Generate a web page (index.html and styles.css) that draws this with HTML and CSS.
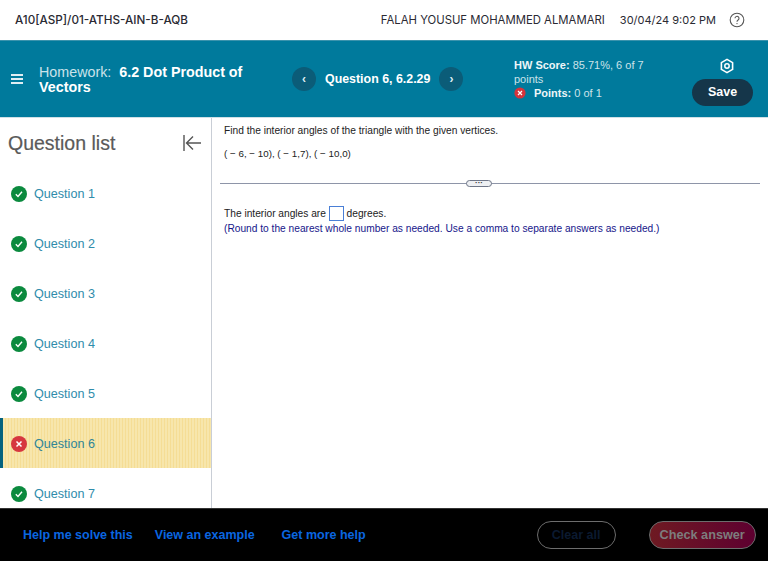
FILE: index.html
```html
<!DOCTYPE html>
<html lang="en">
<head>
<meta charset="utf-8">
<title>Homework</title>
<link rel="stylesheet" href="styles.css">
</head>
<body>
<div class="page">
  <div class="topbar">
    <div class="course">A10[ASP]/01-ATHS-AIN-B-AQB</div>
    <div class="top-right">
      <span class="student">FALAH YOUSUF MOHAMMED ALMAMARI</span>
      <span class="date">30/04/24 9:02 PM</span>
      <svg class="help" viewBox="0 0 16 16" width="16" height="16"><circle cx="8" cy="8" r="6.8" fill="none" stroke="#555" stroke-width="1.1"/><path d="M6 6.3a2 2 0 1 1 3.1 1.7c-.7.5-1.1.8-1.1 1.7" fill="none" stroke="#555" stroke-width="1.1"/><circle cx="8" cy="11.6" r=".7" fill="#555"/></svg>
    </div>
  </div>
  <header class="hw-header">
    <div class="menu"><span></span><span></span><span></span></div>
    <div class="hw-title"><span class="light">Homework:</span>&nbsp; <b>6.2 Dot Product of Vectors</b></div>
    <div class="q-nav">
      <span class="circle">‹</span>
      <b class="q-label">Question 6, 6.2.29</b>
      <span class="circle">›</span>
    </div>
    <div class="score">
      <div><b>HW Score:</b> <span class="light">85.71%, 6 of 7 points</span></div>
      <div class="points"><svg class="mini" viewBox="0 0 12 12" width="12" height="12"><circle cx="6" cy="6" r="5.6" fill="#d4343c"/><path d="M4 4l4 4M8 4l-4 4" stroke="#fff" stroke-width="1.2"/></svg><b>Points:</b> <span class="light">0 of 1</span></div>
    </div>
    <div class="actions">
      <svg class="gear" viewBox="0 0 16 16" width="16" height="16"><path d="M8 1.4l5.6 3.2v6.8L8 14.6l-5.6-3.2V4.6z" fill="none" stroke="#fff" stroke-width="1.6" stroke-linejoin="round"/><circle cx="8" cy="8" r="2.2" fill="none" stroke="#fff" stroke-width="1.5"/></svg>
      <button class="save">Save</button>
    </div>
  </header>
  <div class="main">
    <aside class="sidebar">
      <div class="side-head">
        <span class="side-title">Question list</span>
        <svg viewBox="0 0 20 18" width="20" height="18"><path d="M2 1v16M19 9H5M11 2.500L4.500 9l6.500 6.500" fill="none" stroke="#555" stroke-width="1.400"/></svg>
      </div>
      <ul class="qlist">
        <li class="q"><svg class="st" viewBox="0 0 16 16"><circle cx="8" cy="8" r="8" fill="#0b8a3e"/><path d="M4.800 8.300l2.200 2.200 4-4.700" fill="none" stroke="#fff" stroke-width="1.400"/></svg>Question 1</li>
        <li class="q"><svg class="st" viewBox="0 0 16 16"><circle cx="8" cy="8" r="8" fill="#0b8a3e"/><path d="M4.800 8.300l2.200 2.200 4-4.700" fill="none" stroke="#fff" stroke-width="1.400"/></svg>Question 2</li>
        <li class="q"><svg class="st" viewBox="0 0 16 16"><circle cx="8" cy="8" r="8" fill="#0b8a3e"/><path d="M4.800 8.300l2.200 2.200 4-4.700" fill="none" stroke="#fff" stroke-width="1.400"/></svg>Question 3</li>
        <li class="q"><svg class="st" viewBox="0 0 16 16"><circle cx="8" cy="8" r="8" fill="#0b8a3e"/><path d="M4.800 8.300l2.200 2.200 4-4.700" fill="none" stroke="#fff" stroke-width="1.400"/></svg>Question 4</li>
        <li class="q"><svg class="st" viewBox="0 0 16 16"><circle cx="8" cy="8" r="8" fill="#0b8a3e"/><path d="M4.800 8.300l2.200 2.200 4-4.700" fill="none" stroke="#fff" stroke-width="1.400"/></svg>Question 5</li>
        <li class="q current"><svg class="st" viewBox="0 0 16 16"><circle cx="8" cy="8" r="8" fill="#d6373f"/><path d="M5.500 5.500l5 5M10.500 5.500l-5 5" stroke="#fff" stroke-width="1.500"/></svg>Question 6</li>
        <li class="q"><svg class="st" viewBox="0 0 16 16"><circle cx="8" cy="8" r="8" fill="#0b8a3e"/><path d="M4.800 8.300l2.200 2.200 4-4.700" fill="none" stroke="#fff" stroke-width="1.400"/></svg>Question 7</li>
      </ul>
    </aside>
    <section class="content">
      <p class="prompt">Find the interior angles of the triangle with the given vertices.</p>
      <p class="verts">( − 6, − 10), ( − 1,7), ( − 10,0)</p>
      <div class="divider"><span class="handle">···</span></div>
      <p class="answer">The interior angles are <span class="box"></span> degrees.</p>
      <p class="hint">(Round to the nearest whole number as needed. Use a comma to separate answers as needed.)</p>
    </section>
  </div>
  <footer class="footer">
    <a class="flink">Help me solve this</a>
    <a class="flink l2">View an example</a>
    <a class="flink l3">Get more help</a>
    <button class="clear">Clear all</button>
    <button class="check">Check answer</button>
  </footer>
</div>
</body>
</html>
```
FILE: styles.css
```css
* { box-sizing: border-box; }
html, body { margin: 0; padding: 0; background: #fff; }
body { font-family: "Inter", "Liberation Sans", sans-serif; }
.page { width: 768px; height: 566px; overflow: hidden; display: flex; flex-direction: column; }

.topbar { height: 40px; flex: none; display: flex; align-items: center; justify-content: space-between; padding: 0 23px 1px 15px; color: #2a2a33; }
.course { font-weight: 500; font-size: 11.700px; }
.top-right { display: flex; align-items: center; }
.student { margin-right: 15px; font-size: 11.350px; }
.date { margin-right: 13px; font-size: 11px; }

.hw-header { height: 78px; flex: none; background: #007a9c; color: #fff; display: flex; align-items: center; position: relative; font-family: "Liberation Sans", sans-serif; border-bottom: 1px solid #cfe0e6; border-top: 1px solid #3b93ad; }
.menu { width: 12px; margin-left: 11px; display: flex; flex-direction: column; gap: 2.500px; }
.menu span { display: block; height: 1.500px; background: #dfeef3; }
.hw-title { width: 236px; margin-left: 16px; padding-top: 2px; font-size: 14.300px; line-height: 15px; }
.light { color: #cbe3ea; font-weight: 400; }
.q-nav { display: flex; align-items: center; margin-left: 17px; width: 174px; }
.circle { width: 24px; height: 24px; border-radius: 50%; background: #0b5c78; display: flex; align-items: center; justify-content: center; font-weight: 700; font-size: 12px; color: #dfeef3; flex: none; }
.q-label { font-size: 12.400px; margin: 0 9px; white-space: nowrap; }
.score { width: 150px; margin-left: 48px; font-size: 11px; line-height: 14px; margin-top: -1px; }
.score b { color: #eef6f8; }
.points { display: flex; align-items: center; gap: 8px; }
.points .light { margin-left: -5px; }
.mini { flex: none; }
.actions { position: absolute; left: 692px; top: 17px; width: 61px; display: flex; flex-direction: column; gap: 5px; }
.gear { margin-left: 27px; }
.save { width: 61px; height: 27px; border-radius: 14px; border: 0; background: #15364a; color: #fff; font: 700 12.500px "Liberation Sans", sans-serif; padding: 0 0 2px; }

.main { flex: none; height: 390px; display: flex; }
.sidebar { width: 212px; flex: none; border-right: 1px solid #c9ced6; overflow: hidden; }
.side-head { height: 50px; padding: 0 9px 0 8px; display: flex; align-items: center; justify-content: space-between; }
.side-title { font: 500 19.500px "Liberation Sans", sans-serif; color: #5a5a5a; -webkit-text-stroke: .2px #5a5a5a; }
.qlist { list-style: none; margin: 0; padding: 0; }
.q { height: 50px; display: flex; align-items: center; padding: 1px 0 0 11px; gap: 7px; font: 12.600px "Liberation Sans", sans-serif; color: #2f8cab; }
.st { width: 16px; height: 16px; flex: none; }
.current { border-left: 3px solid #04627e; padding-left: 8px; background: repeating-linear-gradient(90deg, #f7e6ac 0 2px, #f5dd95 2px 3px); color: #2f8597; }

.content { flex: 1; font: 10.200px "Liberation Sans", sans-serif; color: #222; padding: 7px 8px 0 8px; }
.content p { margin: 0; }
.prompt { padding-left: 4px; line-height: 12px; }
.verts { padding-left: 4px; margin-top: 11px !important; line-height: 12px; font-size: 9.800px; }
.divider { margin-top: 23px; height: 1px; background: #8e95a8; position: relative; }
.handle { position: absolute; left: 246px; top: -3px; width: 26px; height: 7px; border: 1px solid #6f7688; border-radius: 4px; background: #eef0f3; font-size: 8px; font-weight: 700; line-height: 4px; text-align: center; color: #333; }
.answer { padding-left: 4px; margin-top: 21px !important; display: flex; align-items: center; white-space: pre; height: 16px; }
.box { display: inline-block; width: 15px; height: 15px; border: 1px solid #4a7fd6; margin: 0; }
.hint { padding-left: 4px; color: #16168a; line-height: 14px; margin-top: 1px !important; }

.footer { height: 53px; flex: none; background: #000; display: flex; align-items: center; padding-left: 23px; font: 700 12.500px "Liberation Sans", sans-serif; border-top: 1px solid #333; }
.flink { color: #0a66e0; }
.l2 { margin-left: 22px; }
.l3 { margin-left: 27px; }
.clear { margin-left: 171px; width: 79px; height: 28px; border-radius: 14px; background: #000; border: 1.500px solid #6d6d6d; color: #0b1a30; font: 700 12.500px "Liberation Sans", sans-serif; padding: 0; }
.check { margin-left: 33px; width: 107px; height: 28px; border-radius: 14px; border: 1.500px solid #6d6d6d; background: linear-gradient(90deg, #6e1a22, #5e0030); color: #7d7d7d; font: 700 12.700px "Liberation Sans", sans-serif; padding: 0; }
```
